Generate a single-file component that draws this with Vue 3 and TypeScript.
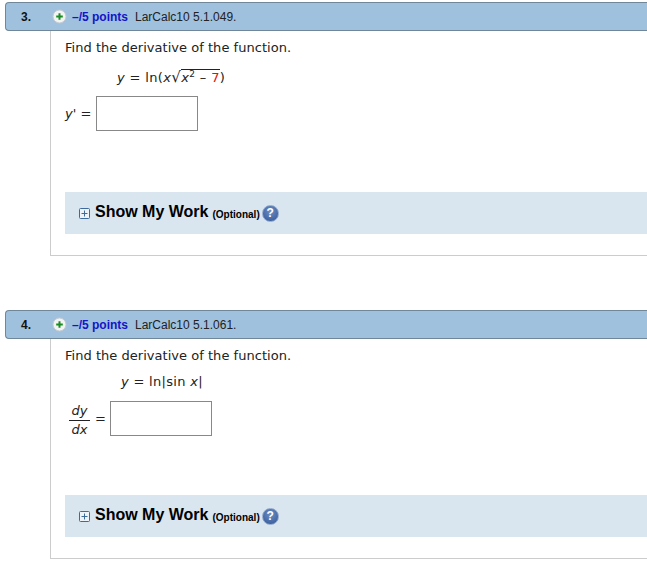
<script setup lang="ts">
interface Question {
  num: string
  code: string
  kind: string
}

const questions: Question[] = [
  { num: '3.', code: 'LarCalc10 5.1.049.', kind: 'a' },
  { num: '4.', code: 'LarCalc10 5.1.061.', kind: 'b' },
]
</script>

<template>
  <div class="page">
    <section v-for="q in questions" :key="q.num" class="question" :class="q.kind">
      <header class="bar">
        <span class="num">{{ q.num }}</span>
        <span class="plus">
          <svg width="15" height="15" viewBox="0 0 15 15">
            <circle cx="7.5" cy="7.5" r="6.5" fill="#f2f4f4" stroke="#c3ccd3" />
            <path d="M7.5 4.2v6.6M4.2 7.5h6.6" stroke="#1a8a22" stroke-width="2" />
          </svg>
        </span>
        <span class="points">–/5 points</span>
        <span class="code">{{ q.code }}</span>
      </header>
      <div class="body">
        <p class="prompt">Find the derivative of the function.</p>
        <div v-if="q.kind === 'a'" class="formula first">
          <i>y</i> = ln(<i>x</i><span class="root">√</span><span class="radicand"><i>x</i><sup>2</sup> – <span class="red">7</span></span>)
        </div>
        <div v-else class="formula second"><i>y</i> = ln|sin <i>x</i>|</div>

        <div v-if="q.kind === 'a'" class="answer">
          <span class="label"><i>y'</i> =</span>
          <span class="box"></span>
        </div>
        <div v-else class="answer frac-row">
          <span class="frac"><i class="top">dy</i><i class="bottom">dx</i></span>
          <span class="eq">=</span>
          <span class="box"></span>
        </div>

        <div class="work">
          <span class="expand">
            <svg width="11" height="11" viewBox="0 0 11 11">
              <rect x="0.5" y="0.5" width="10" height="10" rx="1" fill="#eef3f8" stroke="#3f6b9c" />
              <path d="M5.5 2.5v6M2.5 5.5h6" stroke="#3f6b9c" />
            </svg>
          </span>
          <span class="work-title">Show My Work</span>
          <span class="optional">(Optional)</span>
          <span class="help">?</span>
        </div>
      </div>
    </section>
  </div>
</template>

<style scoped>
.page {
  width: 647px;
  height: 562px;
  overflow: hidden;
  padding-top: 2px;
  box-sizing: border-box;
  background: #fff;
}

.question {
  margin-left: 5px;
  height: 308px;
}

.bar {
  height: 29px;
  box-sizing: border-box;
  background: #9fc1de;
  border: 1px solid #6f8799;
  border-right: none;
  border-radius: 4px 0 0 4px;
  display: flex;
  align-items: center;
  font-family: "Liberation Sans", Arial, sans-serif;
  font-size: 12px;
  color: #111;
}

.num {
  width: 46px;
  padding-left: 15px;
  box-sizing: border-box;
  font-weight: bold;
}

.plus {
  display: flex;
  margin-right: 5px;
}

.points {
  color: #1414c8;
  font-weight: bold;
  margin-right: 7px;
}

.code {
  color: #222;
}

.body {
  margin-left: 45px;
  box-sizing: border-box;
  border-left: 1px solid #ccc;
  border-bottom: 1px solid #ccc;
  padding: 0 0 21px 14px;
  font-family: "DejaVu Sans", Verdana, sans-serif;
  font-size: 13px;
  color: #222;
}

.prompt {
  margin: 0;
  padding-top: 9px;
  line-height: 16px;
  letter-spacing: 0.03px;
}

.formula {
  line-height: 18px;
  margin-top: 12px;
  white-space: nowrap;
}

.first {
  padding-left: 52px;
  letter-spacing: 0.35px;
}

.second {
  padding-left: 56px;
  margin-top: 9px;
  letter-spacing: 0.3px;
}

.root {
  font-size: 15px;
}

.radicand {
  border-top: 1px solid #222;
}

sup {
  font-size: 9px;
  line-height: 0;
}

.red {
  color: #e01010;
}

.answer {
  display: flex;
  align-items: center;
  margin-top: 9px;
  height: 35px;
}

.label {
  margin-right: 5px;
}

.box {
  width: 100px;
  height: 33px;
  border: 1px solid #888;
  background: #fff;
}

.frac-row {
  margin-top: 10px;
}

.frac {
  display: flex;
  flex-direction: column;
  align-items: center;
  width: 21px;
  margin: 3px 0 0 4px;
  line-height: 18px;
}

.top {
  border-bottom: 1px solid #222;
  width: 100%;
  text-align: center;
}

.eq {
  margin: 0 4px 0 5px;
}

.work {
  margin-top: 61px;
  height: 42px;
  background: #d9e5ef;
  display: flex;
  align-items: center;
  padding-left: 14px;
  font-family: "Liberation Sans", Arial, sans-serif;
  color: #000;
}

.b .work {
  margin-top: 59px;
}

.expand {
  display: flex;
  margin-right: 5px;
}

.work-title {
  font-size: 16px;
  font-weight: bold;
  margin-right: 4px;
  margin-bottom: 2px;
}

.optional {
  font-size: 10px;
  font-weight: bold;
  margin-top: 3px;
  margin-right: 2px;
}

.help {
  width: 17px;
  height: 17px;
  box-sizing: border-box;
  border-radius: 50%;
  background: radial-gradient(circle at 50% 35%, #6f8fc4, #2f5596);
  border: 1px solid #8da6cc;
  color: #fff;
  font-size: 12px;
  font-weight: bold;
  text-align: center;
  line-height: 15px;
}
</style>
